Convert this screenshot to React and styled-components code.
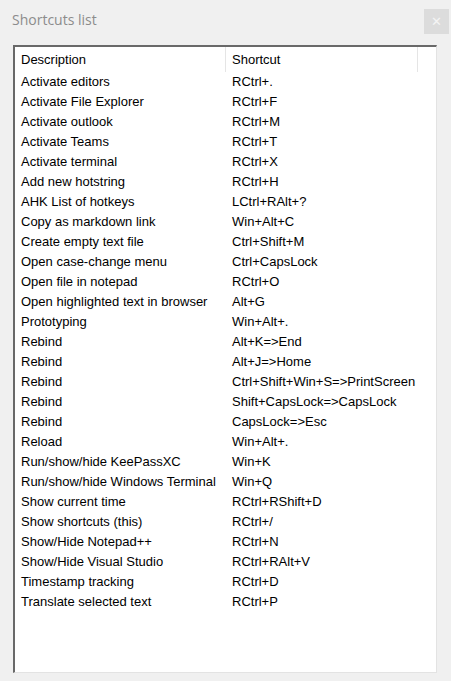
import React from "react";
import styled, { createGlobalStyle } from "styled-components";

const GlobalStyle = createGlobalStyle`
  html, body {
    margin: 0;
    padding: 0;
    background: #f0f0f0;
  }
  body {
    width: 451px;
    height: 681px;
    overflow: hidden;
  }
`;

const Window = styled.div`
  width: 451px;
  height: 681px;
  box-sizing: border-box;
  background: #f0f0f0;
  display: flex;
  flex-direction: column;
  font-family: "Liberation Sans", Arial, sans-serif;
`;

const TitleBar = styled.div`
  height: 45px;
  display: flex;
  align-items: flex-start;
  justify-content: space-between;
  padding: 9px 2px 0 12px;
  box-sizing: border-box;
`;

const Title = styled.span`
  font-family: "Open Sans", "Noto Sans", sans-serif;
  font-size: 14px;
  color: #8c8c8c;
  margin-top: 1px;
`;

const CloseButton = styled.div`
  width: 25px;
  height: 25px;
  background: #dcdcdc;
  color: #f4f4f4;
  font-size: 13px;
  display: flex;
  align-items: center;
  justify-content: center;
`;

const ListBox = styled.div`
  margin: 0 14px 8px 13px;
  flex: 1;
  background: #fff;
  border-top: 2px solid #696969;
  border-left: 2px solid #696969;
  border-right: 1px solid #e3e3e3;
  border-bottom: 1px solid #e3e3e3;
  box-shadow: inset -1px -1px 0 #ffffff;
  font-size: 13px;
  color: #000;
`;

const Grid = styled.div`
  display: grid;
  grid-template-columns: 211px 192px 1fr;
`;

const HeaderCell = styled.div`
  height: 25px;
  line-height: 25px;
  padding-left: 6px;
  border-right: ${(p) => (p.$last ? "none" : "1px solid #e5e5e5")};
  white-space: nowrap;
`;

const Cell = styled.div`
  height: 20px;
  line-height: 20px;
  padding-left: 6px;
  white-space: nowrap;
  overflow: hidden;
`;

const rows = [
  ["Activate editors", "RCtrl+."],
  ["Activate File Explorer", "RCtrl+F"],
  ["Activate outlook", "RCtrl+M"],
  ["Activate Teams", "RCtrl+T"],
  ["Activate terminal", "RCtrl+X"],
  ["Add new hotstring", "RCtrl+H"],
  ["AHK List of hotkeys", "LCtrl+RAlt+?"],
  ["Copy as markdown link", "Win+Alt+C"],
  ["Create empty text file", "Ctrl+Shift+M"],
  ["Open case-change menu", "Ctrl+CapsLock"],
  ["Open file in notepad", "RCtrl+O"],
  ["Open highlighted text in browser", "Alt+G"],
  ["Prototyping", "Win+Alt+."],
  ["Rebind", "Alt+K=>End"],
  ["Rebind", "Alt+J=>Home"],
  ["Rebind", "Ctrl+Shift+Win+S=>PrintScreen"],
  ["Rebind", "Shift+CapsLock=>CapsLock"],
  ["Rebind", "CapsLock=>Esc"],
  ["Reload", "Win+Alt+."],
  ["Run/show/hide KeePassXC", "Win+K"],
  ["Run/show/hide Windows Terminal", "Win+Q"],
  ["Show current time", "RCtrl+RShift+D"],
  ["Show shortcuts (this)", "RCtrl+/"],
  ["Show/Hide Notepad++", "RCtrl+N"],
  ["Show/Hide Visual Studio", "RCtrl+RAlt+V"],
  ["Timestamp tracking", "RCtrl+D"],
  ["Translate selected text", "RCtrl+P"],
];

const App = () => {
  return (
    <Window>
      <GlobalStyle />
      <TitleBar>
        <Title>Shortcuts list</Title>
        <CloseButton>✕</CloseButton>
      </TitleBar>
      <ListBox>
        <Grid>
          <HeaderCell>Description</HeaderCell>
          <HeaderCell>Shortcut</HeaderCell>
          <HeaderCell $last></HeaderCell>
          {rows.map(([desc, key], i) => (
            <React.Fragment key={i}>
              <Cell>{desc}</Cell>
              <Cell>{key}</Cell>
              <Cell></Cell>
            </React.Fragment>
          ))}
        </Grid>
      </ListBox>
    </Window>
  );
};

export default App;
